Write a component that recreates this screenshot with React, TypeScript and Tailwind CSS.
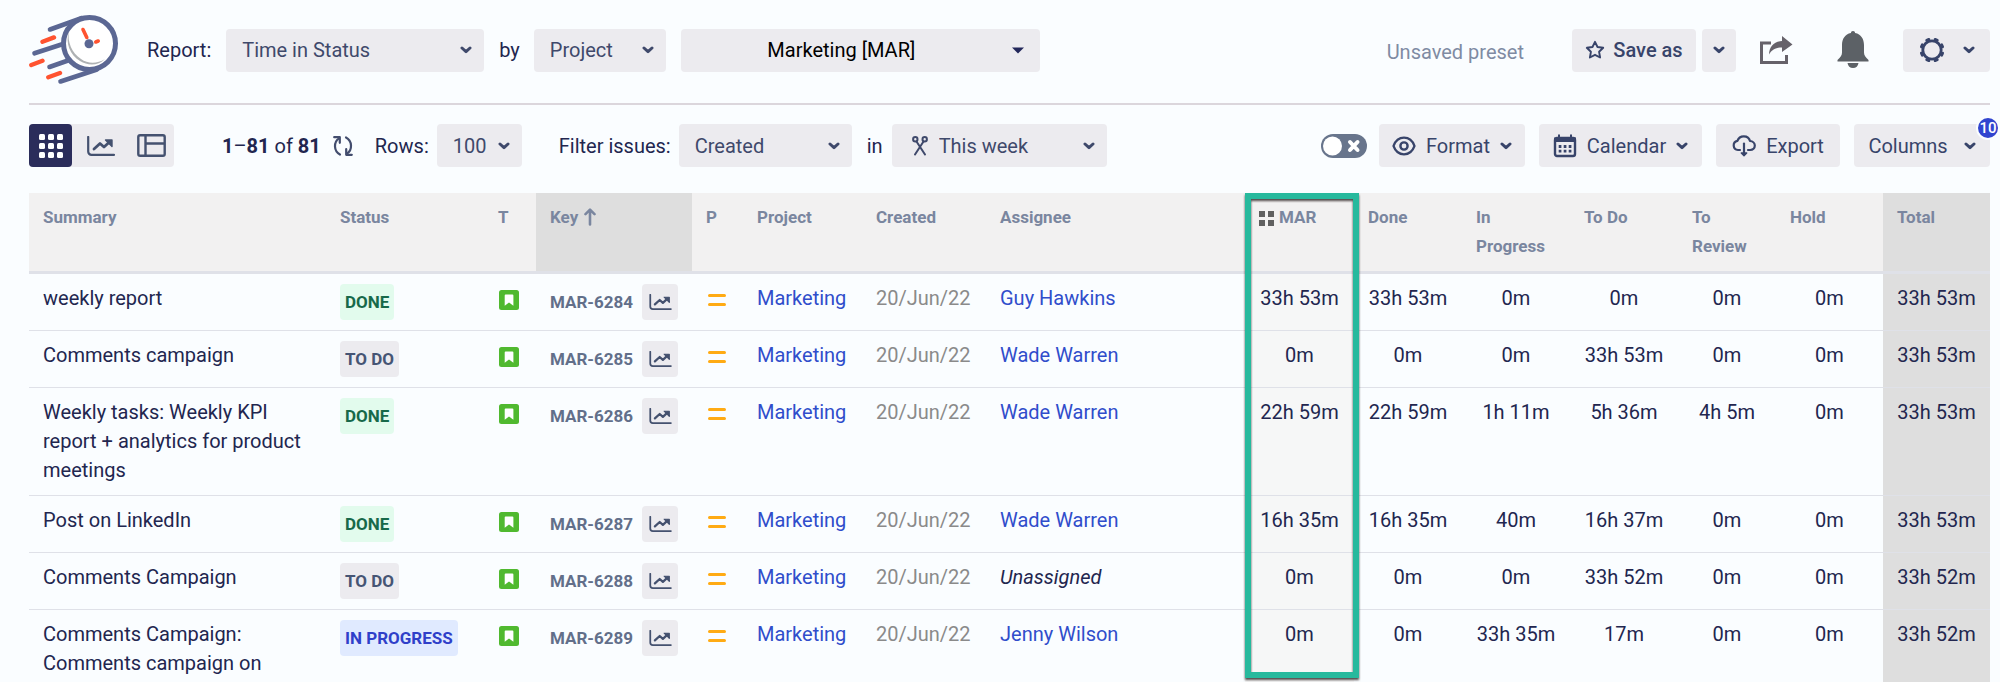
import type { ReactNode } from "react";

type Status = "DONE" | "TO DO" | "IN PROGRESS";

interface Issue {
  summary: string;
  status: Status;
  key: string;
  assignee: string;
  times: string[];
  total: string;
}

const issues: Issue[] = [
  {
    summary: "weekly report",
    status: "DONE",
    key: "MAR-6284",
    assignee: "Guy Hawkins",
    times: ["33h 53m", "33h 53m", "0m", "0m", "0m", "0m"],
    total: "33h 53m",
  },
  {
    summary: "Comments campaign",
    status: "TO DO",
    key: "MAR-6285",
    assignee: "Wade Warren",
    times: ["0m", "0m", "0m", "33h 53m", "0m", "0m"],
    total: "33h 53m",
  },
  {
    summary: "Weekly tasks: Weekly KPI report + analytics for product meetings",
    status: "DONE",
    key: "MAR-6286",
    assignee: "Wade Warren",
    times: ["22h 59m", "22h 59m", "1h 11m", "5h 36m", "4h 5m", "0m"],
    total: "33h 53m",
  },
  {
    summary: "Post on LinkedIn",
    status: "DONE",
    key: "MAR-6287",
    assignee: "Wade Warren",
    times: ["16h 35m", "16h 35m", "40m", "16h 37m", "0m", "0m"],
    total: "33h 53m",
  },
  {
    summary: "Comments Campaign",
    status: "TO DO",
    key: "MAR-6288",
    assignee: "",
    times: ["0m", "0m", "0m", "33h 52m", "0m", "0m"],
    total: "33h 52m",
  },
  {
    summary: "Comments Campaign: Comments campaign on",
    status: "IN PROGRESS",
    key: "MAR-6289",
    assignee: "Jenny Wilson",
    times: ["0m", "0m", "33h 35m", "17m", "0m", "0m"],
    total: "33h 52m",
  },
];

const statusStyles: Record<Status, string> = {
  DONE: "bg-[#e2fbed] text-[#17694a]",
  "TO DO": "bg-[#ecebef] text-[#465574]",
  "IN PROGRESS": "bg-[#e0eaff] text-[#2f3fc9]",
};

/* ---------- icons ---------- */

function Chevron() {
  return (
    <svg className="w-3 h-2 shrink-0" viewBox="0 0 12 8" fill="none" stroke="currentColor" strokeWidth="3" strokeLinecap="round" strokeLinejoin="round">
      <path d="M2 2l4 3.6L10 2" />
    </svg>
  );
}

function Logo() {
  return (
    <svg className="w-[92px] h-[72px] shrink-0" viewBox="29 14 92 72" fill="none" strokeLinecap="round">
      <circle cx="89.5" cy="43.5" r="26" fill="#fff" stroke="#5b6793" strokeWidth="5" />
      <path d="M69 31c-4 12 1 24 11 30 8 5 18 5 25-2-8 5-17 5-24 0-9-6-14-17-12-28z" fill="#aeb1b3" />
      <g stroke="#5b6793" strokeWidth="4.6">
        <path d="M50 29.5L82 18M34.5 53.3L63 44M49.5 67L68 60.5M60.5 81.5L97 69.5" />
      </g>
      <g stroke="#ff5330" strokeWidth="4.4">
        <path d="M42.5 41.7L54 37.4M31.3 65L42.5 60.8M48.3 77.3L60 73" />
      </g>
      <path d="M83 29.5l3.8 8M95.8 42l2.4-1" stroke="#ff5330" strokeWidth="3.6" />
      <circle cx="89" cy="43.7" r="4.5" fill="#5b6793" />
    </svg>
  );
}

function GridIcon() {
  return (
    <svg className="w-6 h-6" viewBox="0 0 24 24" fill="currentColor">
      {[0, 9, 18].map((y) =>
        [0, 9, 18].map((x) => <rect key={`${x}-${y}`} x={x} y={y} width="6" height="6" rx="1.5" />)
      )}
    </svg>
  );
}

function ChartIcon({ className }: { className: string }) {
  return (
    <svg className={className} viewBox="0 0 28 20" fill="none" stroke="currentColor" strokeLinecap="round" strokeLinejoin="round">
      <path d="M1.2 1v14.6a3.2 3.2 0 0 0 3.2 3.2H27" strokeWidth="2.2" />
      <path d="M7 13l6-5.5 4 3.5 6-5.5" strokeWidth="2.8" />
      <path d="M18.5 4H25v6.5z" fill="currentColor" strokeWidth="1.4" />
    </svg>
  );
}

function LayoutIcon() {
  return (
    <svg className="w-[29px] h-[23px]" viewBox="0 0 29 23" fill="none" stroke="currentColor" strokeWidth="2.4">
      <rect x="1.3" y="1.3" width="26.4" height="20.4" rx="1.8" />
      <path d="M8.5 1.5v20M8.5 9.5h19" />
    </svg>
  );
}

function RefreshIcon() {
  return (
    <svg className="w-5 h-5" viewBox="0 0 20 20" fill="none" stroke="currentColor" strokeWidth="2.2" strokeLinecap="round" strokeLinejoin="round">
      <path d="M7 18.5C.5 15 .5 6 6 2.4M13 1.5c6.500 3.500 6.500 12.500 1 16.1" />
      <path d="M1.2 1.2h5.6v5.6M18.8 18.8h-5.6v-5.6" />
    </svg>
  );
}

function ScissorsIcon() {
  return (
    <svg className="w-4 h-5" viewBox="0 0 16 20" fill="none" stroke="currentColor" strokeWidth="2" strokeLinecap="round">
      <circle cx="3.3" cy="3.3" r="2.2" />
      <circle cx="12.7" cy="3.3" r="2.2" />
      <path d="M4.5 5.5L13 18.5M11.5 5.5L3 18.5" />
    </svg>
  );
}

function StarIcon() {
  return (
    <svg className="w-5 h-5" viewBox="0 0 20 20" fill="none" stroke="currentColor" strokeWidth="1.9" strokeLinejoin="round">
      <path d="M10 1.8l2.5 5.2 5.7.8-4.1 4 1 5.7-5.1-2.7-5.1 2.7 1-5.7-4.1-4 5.7-.8z" />
    </svg>
  );
}

function ShareIcon() {
  return (
    <svg className="w-[34px] h-[29px] text-[#66626a]" viewBox="0 0 34 29" fill="currentColor">
      <path d="M12 7H2.5v19.5h25V19" fill="none" stroke="currentColor" strokeWidth="3" />
      <path d="M10 18.5C10.5 10 15 5.5 23 5V0l10.5 8.5L23 16v-4.6c-6 0-10 2-13 7.1z" />
    </svg>
  );
}

function BellIcon() {
  return (
    <svg className="w-8 h-[38px] text-[#5c6166]" viewBox="0 0 32 38" fill="currentColor">
      <path d="M16 0c1.4 0 2 .9 2.1 2.1C24 3.3 27 8 27 14v7.5c0 3 1.5 4.8 4.5 7.5v1.5H.5V29C3.500 26.300 5 24.500 5 21.5V14c0-6 3-10.7 8.9-11.9C14 .9 14.6 0 16 0z" />
      <path d="M10.5 32h11c-.4 3-2.5 5-5.5 5s-5.1-2-5.5-5z" />
    </svg>
  );
}

function GearIcon() {
  return (
    <svg className="w-[26px] h-[26px]" viewBox="0 0 26 26" fill="none" stroke="currentColor">
      <circle cx="13" cy="13" r="9.2" strokeWidth="2.8" />
      {[22.5, 67.5, 112.5, 157.5, 202.5, 247.5, 292.5, 337.5].map((deg) => (
        <path key={deg} d="M11.8 2h2.4" strokeWidth="2.8" strokeLinecap="round" transform={`rotate(${deg} 13 13)`} />
      ))}
    </svg>
  );
}

function EyeIcon() {
  return (
    <svg className="w-6 h-5" viewBox="0 0 24 20" fill="none" stroke="currentColor" strokeWidth="2.2">
      <path d="M1.5 10C3.5 4.5 7.3 1.7 12 1.7S20.5 4.5 22.5 10c-2 5.5-5.8 8.3-10.5 8.3S3.5 15.5 1.5 10z" strokeLinejoin="round" />
      <circle cx="12" cy="10" r="3.6" strokeWidth="2.4" />
    </svg>
  );
}

function CalendarIcon() {
  return (
    <svg className="w-6 h-6" viewBox="0 0 24 24" fill="none" stroke="currentColor">
      <rect x="2" y="4" width="20" height="18" rx="2" strokeWidth="2.4" />
      <path d="M1 3.5h22V8H1z" fill="currentColor" stroke="none" />
      <path d="M6 1.2v3M18 1.2v3" strokeWidth="2" strokeLinecap="round" />
      <path d="M5.7 12.5h12.9M5.7 17.2h12.9" strokeWidth="2.8" strokeDasharray="2.7 2.3" />
    </svg>
  );
}

function CloudIcon() {
  return (
    <svg className="w-6 h-[22px]" viewBox="0 0 24 22" fill="none" stroke="currentColor" strokeWidth="2.2" strokeLinecap="round" strokeLinejoin="round">
      <path d="M8 15H6a4.6 4.6 0 0 1-.6-9.1C6.4 3 9 1.3 11.8 1.3c3.2 0 5.6 2 6.2 4.7 2.7.2 4.8 2.1 4.8 4.6S20.9 15 18.2 15H16" />
      <path d="M12 8.5v11" />
      <path d="M9.3 18h5.4L12 20.8z" fill="currentColor" strokeWidth="1.4" />
    </svg>
  );
}

function StoryIcon() {
  return (
    <svg className="w-5 h-5" viewBox="0 0 20 20" role="img" aria-label="Story">
      <rect width="20" height="20" rx="2.5" fill="#50b92f" />
      <path d="M6.8 4.500h6.600a1 1 0 0 1 1 1V15.800L10 12.500l-4.300 3.300V5.500a1 1 0 0 1 1.100-1z" fill="#fff" />
    </svg>
  );
}

function PriorityIcon() {
  return (
    <svg className="w-[18px] h-3" viewBox="0 0 18 12" fill="none" stroke="#ffab14" strokeWidth="3" strokeLinecap="round" role="img" aria-label="Medium">
      <path d="M1.5 1.5h15M1.5 10.5h15" />
    </svg>
  );
}

/* ---------- controls ---------- */

interface DropdownProps {
  id: string;
  value: string;
  width: string;
  pad?: string;
  icon?: ReactNode;
}

function Dropdown({ id, value, width, pad = "pl-4", icon }: DropdownProps) {
  return (
    <div className={`relative text-[#3f496b] ${width}`}>
      <select
        id={id}
        defaultValue={value}
        className={`w-full h-[43px] ${pad} appearance-none rounded bg-[#ecebef] text-xl`}
      >
        <option>{value}</option>
      </select>
      {icon && <span className="absolute left-5 inset-y-0 flex items-center pointer-events-none">{icon}</span>}
      <span className="absolute right-3 inset-y-0 flex items-center pointer-events-none">
        <Chevron />
      </span>
    </div>
  );
}

const button =
  "h-[43px] shrink-0 flex items-center justify-center rounded bg-[#ecebef] text-xl text-[#38446a]";

function TopBar() {
  return (
    <header className="flex items-center pb-[17px] border-b-2 border-[#dbd6dc]">
      <Logo />
      <label htmlFor="report" className="ml-[26px] mr-[15px]">Report:</label>
      <Dropdown id="report" value="Time in Status" width="w-[258px]" />
      <label htmlFor="group" className="ml-[15px] mr-[14px]">by</label>
      <Dropdown id="group" value="Project" width="w-[132px]" />
      <div className="relative ml-[15px] w-[359px]">
        <select
          aria-label="Project"
          defaultValue="Marketing [MAR]"
          className="w-full h-[43px] pr-[38px] appearance-none rounded bg-[#ecebef] text-xl text-black [text-align-last:center]"
        >
          <option>Marketing [MAR]</option>
        </select>
        <span className="absolute right-4 inset-y-0 flex items-center pointer-events-none">
          <svg className="w-3 h-[7px]" viewBox="0 0 12 7" fill="#22275a"><path d="M0 .5h12L6 6.5z" /></svg>
        </span>
      </div>
      <div className="ml-auto flex items-center">
        <span className="mr-12 pt-1 text-[#7f8ba3]">Unsaved preset</span>
        <button className={`${button} w-[124px] gap-2`}>
          <StarIcon />
          <span className="font-medium">Save as</span>
        </button>
        <button aria-label="Save options" className={`${button} ml-1.5 w-[34px]`}><Chevron /></button>
        <button aria-label="Share" className="ml-[23px]"><ShareIcon /></button>
        <button aria-label="Notifications" className="ml-11"><BellIcon /></button>
        <button aria-label="Settings" className={`${button} ml-[34px] w-[87px] gap-[18px]`}>
          <GearIcon />
          <Chevron />
        </button>
      </div>
    </header>
  );
}

function Toolbar() {
  return (
    <div className="flex items-center pt-[19px] pb-[26px]">
      <div className="flex rounded bg-[#ecebef] text-[#44516f]">
        <button aria-label="Table view" className="w-[43px] h-[43px] flex items-center justify-center rounded bg-[#2b2d5b] text-white"><GridIcon /></button>
        <button aria-label="Chart view" className="w-[57px] flex items-center justify-center"><ChartIcon className="w-7 h-5" /></button>
        <button aria-label="Pivot view" className="w-[45px] flex items-center justify-center"><LayoutIcon /></button>
      </div>
      <p className="ml-12"><b>1</b>–<b>81</b> of <b>81</b></p>
      <button aria-label="Refresh" className="ml-3 text-[#434d6e]"><RefreshIcon /></button>
      <label htmlFor="rows" className="ml-[22px] mr-2">Rows:</label>
      <Dropdown id="rows" value="100" width="w-[85px]" />
      <label htmlFor="filter" className="ml-[37px] mr-2">Filter issues:</label>
      <Dropdown id="filter" value="Created" width="w-[173px]" />
      <label htmlFor="range" className="ml-[15px] mr-[9px]">in</label>
      <Dropdown id="range" value="This week" width="w-[215px]" pad="pl-[47px]" icon={<ScissorsIcon />} />

      <div className="ml-auto flex items-center">
        <div className="relative w-[46px] h-6 mr-3 text-white">
          <input type="checkbox" aria-label="Compact view" className="block w-full h-full appearance-none rounded-full bg-[#68758c]" />
          <svg className="absolute inset-0 pointer-events-none" viewBox="0 0 46 24" fill="currentColor">
            <circle cx="11.5" cy="12" r="9.5" />
            <path d="M29 8l7.5 8M36.5 8L29 16" stroke="currentColor" strokeWidth="4" strokeLinecap="round" />
          </svg>
        </div>
        <button className={`${button} w-[146px] gap-2.5`}>
          <EyeIcon />Format<Chevron />
        </button>
        <button className={`${button} ml-[14px] w-[163px] gap-2.5`}>
          <CalendarIcon />Calendar<Chevron />
        </button>
        <button className={`${button} ml-[14px] w-[124px] gap-2.5`}>
          <CloudIcon />Export
        </button>
        <button className={`${button} relative ml-[14px] w-[136px] gap-4`}>
          Columns<Chevron />
          <span className="absolute -top-2 -right-2.5 w-6 h-6 flex items-center justify-center rounded-full border-2 border-[#fafdff] bg-[#3145cf] text-[15px] font-medium text-white">
            10
          </span>
        </button>
      </div>
    </div>
  );
}

/* ---------- table ---------- */

const columns = [
  { name: "Summary", width: "w-[297px]" },
  { name: "Status", width: "w-[158px]" },
  { name: "T", width: "w-[52px]" },
  { name: "Key", width: "w-[156px]" },
  { name: "P", width: "w-[51px]" },
  { name: "Project", width: "w-[119px]" },
  { name: "Created", width: "w-[124px]" },
  { name: "Assignee", width: "w-[259px]" },
  { name: "MAR", width: "w-[109px]" },
  { name: "Done", width: "w-[108px]" },
  { name: "In Progress", width: "w-[108px]" },
  { name: "To Do", width: "w-[108px]" },
  { name: "To Review", width: "w-[98px]" },
  { name: "Hold", width: "w-[107px]" },
  { name: "Total", width: "w-[107px]" },
];

function HeaderCell({ name }: { name: string }) {
  const shaded = name === "Key" || name === "Total";

  return (
    <th className={`relative py-2.5 px-3.5 ${shaded ? "bg-[#dedede]" : ""}`}>
      {name === "MAR" && (
        <>
          {/* Highlight frame around the grouped column */}
          <span className="absolute z-10 top-0 left-0 -right-[5px] h-[485px] border-6 border-[#27b99d] drop-shadow-[0_2px_1px_rgba(40,30,30,0.8)] pointer-events-none" />
          <svg className="inline w-[15px] h-[15px] mr-[5px]" viewBox="0 0 15 15" fill="#606060">
            <path d="M0 0h6v6H0zM9 0h6v6H9zM0 9h6v6H0zM9 9h6v6H9z" />
          </svg>
        </>
      )}
      {name}
      {name === "Key" && (
        <svg className="inline w-3 h-[18px] ml-1.5 mb-1" viewBox="0 0 12 18" fill="none" stroke="currentColor" strokeWidth="2.6" strokeLinecap="round" strokeLinejoin="round">
          <path d="M6 16.5V2M1.5 6.2L6 1.7l4.5 4.5" />
        </svg>
      )}
    </th>
  );
}

function IssueRow({ issue }: { issue: Issue }) {
  return (
    <tr className="border-b border-[#dfe1e8] align-top">
      <td className="py-2.5 px-3.5">{issue.summary}</td>
      <td className="py-2.5 px-3.5">
        <span className={`inline-flex items-center h-9 px-[5px] rounded align-top whitespace-nowrap text-[17px] font-bold ${statusStyles[issue.status]}`}>
          {issue.status}
        </span>
      </td>
      <td className="py-2.5 pl-[15px]"><div className="h-8 flex items-center"><StoryIcon /></div></td>
      <td className="py-2.5 px-3.5">
        <div className="flex items-center justify-between">
          <a href="#" className="whitespace-nowrap text-[17px] font-bold text-[#626f8a]">{issue.key}</a>
          <button aria-label="Open chart" className="w-9 h-9 shrink-0 flex items-center justify-center rounded bg-[#ecebef] text-[#44516f]">
            <ChartIcon className="w-[23px] h-4" />
          </button>
        </div>
      </td>
      <td className="py-2.5 px-4"><div className="h-8 flex items-center"><PriorityIcon /></div></td>
      <td className="py-2.5 px-3.5"><a href="#" className="text-[#304dcb]">Marketing</a></td>
      <td className="py-2.5 px-3.5 text-[#8a8a8a]">20/Jun/22</td>
      <td className="py-2.5 px-3.5">
        {issue.assignee ? <a href="#" className="text-[#304dcb]">{issue.assignee}</a> : <i>Unassigned</i>}
      </td>
      {issue.times.map((time, i) => (
        <td key={i} className={`py-2.5 px-3.5 text-center whitespace-nowrap ${i === 0 ? "bg-[#f6f7f7]" : ""}`}>{time}</td>
      ))}
      <td className="py-2.5 px-3.5 text-center whitespace-nowrap bg-[#dedede]">{issue.total}</td>
    </tr>
  );
}

export default function App() {
  return (
    <main className="h-screen overflow-hidden bg-[#fafdff] pt-3.5 pl-[29px] pr-2.5 font-['Roboto',sans-serif] text-xl text-[#22264f]">
      <TopBar />
      <Toolbar />
      <table className="w-full table-fixed border-collapse leading-[29px]">
        <colgroup>
          {columns.map((col) => <col key={col.name} className={col.width} />)}
        </colgroup>
        <thead>
          <tr className="border-b-3 border-[#dfe1e8] bg-[#f2f1f1] text-left align-top text-[17px] text-[#7a869f]">
            {columns.map((col) => <HeaderCell key={col.name} name={col.name} />)}
          </tr>
        </thead>
        <tbody>
          {issues.map((issue) => <IssueRow key={issue.key} issue={issue} />)}
        </tbody>
      </table>
    </main>
  );
}
